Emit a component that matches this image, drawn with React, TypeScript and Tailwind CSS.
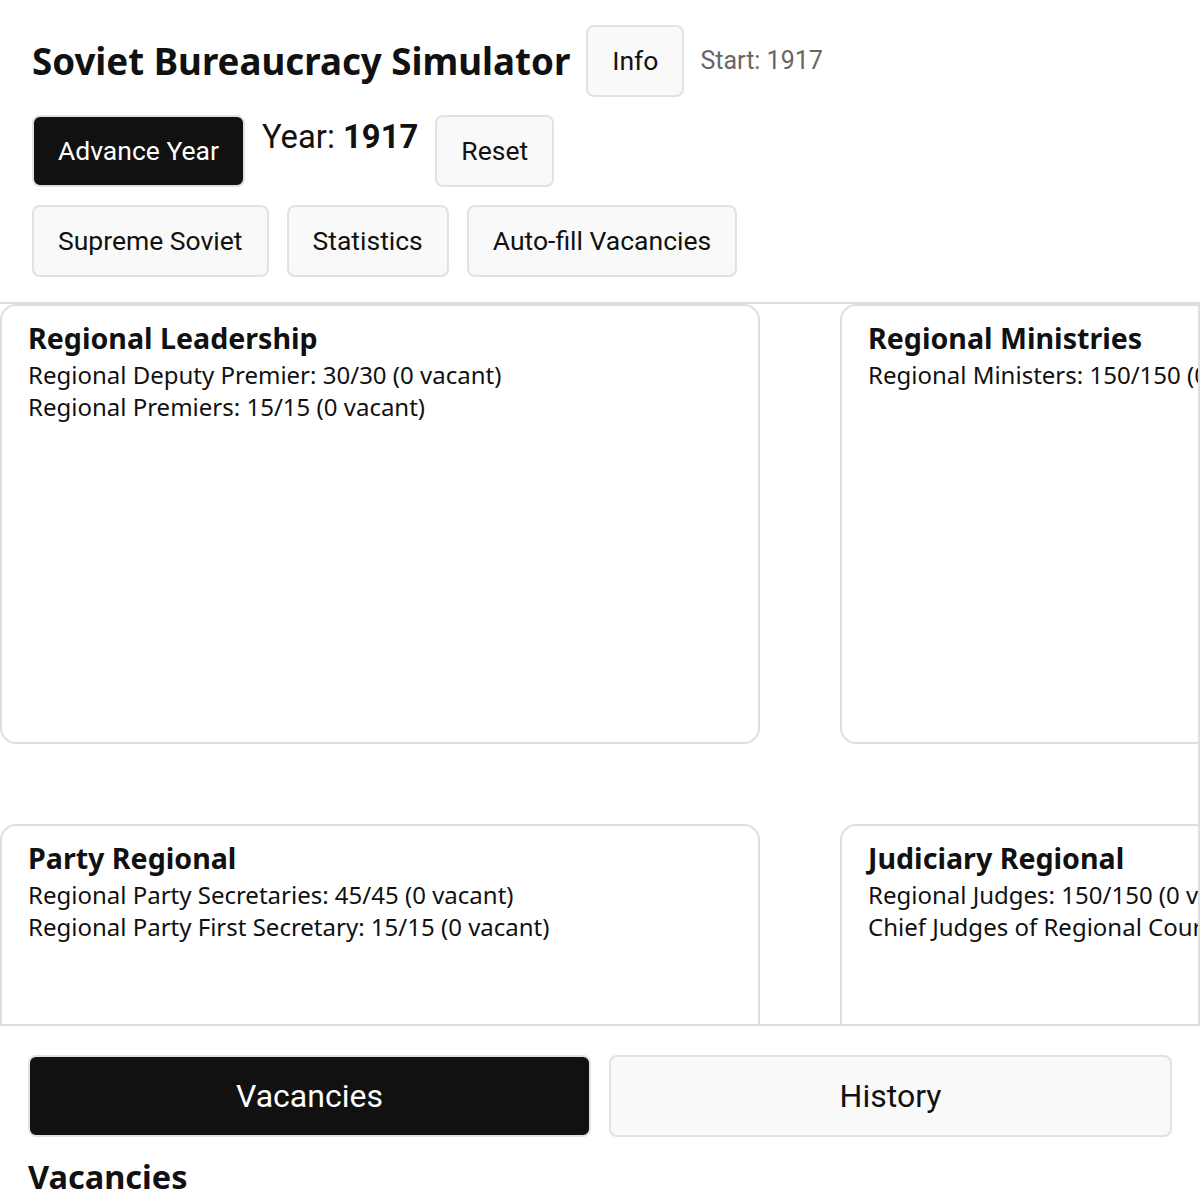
import React from "react";

type Office = { label: string; filled: number; total: number };
type Group = { title: string; offices: Office[] };

const groups: Group[] = [
  {
    title: "Regional Leadership",
    offices: [
      { label: "Regional Deputy Premier", filled: 30, total: 30 },
      { label: "Regional Premiers", filled: 15, total: 15 },
    ],
  },
  {
    title: "Regional Ministries",
    offices: [{ label: "Regional Ministers", filled: 150, total: 150 }],
  },
  {
    title: "Party Regional",
    offices: [
      { label: "Regional Party Secretaries", filled: 45, total: 45 },
      { label: "Regional Party First Secretary", filled: 15, total: 15 },
    ],
  },
  {
    title: "Judiciary Regional",
    offices: [
      { label: "Regional Judges", filled: 150, total: 150 },
      { label: "Chief Judges of Regional Courts", filled: 15, total: 15 },
    ],
  },
];

const btn =
  "h-[72px] px-6 rounded-lg border-2 border-[#e2e2e2] bg-[#f9f9f9] text-[26.5px] text-[#111] font-['Roboto',sans-serif] whitespace-nowrap";

function GroupCard({ group }: { group: Group }) {
  return (
    <div className="h-[440px] rounded-2xl border-2 border-[#dedede] bg-white px-[26px] pt-[10px]">
      <h3 className="text-[28.6px] font-bold leading-[43px] text-[#111] whitespace-nowrap">
        {group.title}
      </h3>
      {group.offices.map((o) => (
        <div key={o.label} className="text-[24px] leading-8 text-[#111] whitespace-nowrap">
          {o.label}: {o.filled}/{o.total} ({o.total - o.filled} vacant)
        </div>
      ))}
    </div>
  );
}

export default function App() {
  return (
    <div className="min-h-screen bg-white font-['Noto_Sans',sans-serif] text-[#111]">
      <header className="flex flex-col gap-[18px] px-8 pt-[25px]">
        <div className="flex items-center gap-4">
          <h1 className="text-[36.7px] font-bold leading-none">Soviet Bureaucracy Simulator</h1>
          <button className={btn}>Info</button>
          <span className="font-['Roboto',sans-serif] text-[25px] text-[#666]">Start: 1917</span>
        </div>
        <div className="flex items-start gap-[17px]">
          <button className={btn + " !bg-[#111] !text-white"}>Advance Year</button>
          <span className="font-['Roboto',sans-serif] text-[32.8px] leading-[44px]">
            Year: <b>1917</b>
          </span>
          <button className={btn}>Reset</button>
        </div>
        <div className="flex items-center gap-[18px]">
          <button className={btn}>Supreme Soviet</button>
          <button className={btn}>Statistics</button>
          <button className={btn}>Auto-fill Vacancies</button>
        </div>
      </header>

      <div className="mt-[25px] h-[724px] overflow-hidden border-y-2 border-r-2 border-[#dedede]">
        <div className="grid grid-cols-[760px_760px] gap-20">
          {groups.map((g) => (
            <GroupCard key={g.title} group={g} />
          ))}
        </div>
      </div>

      <section className="px-7 pt-[29px]">
        <div className="grid grid-cols-2 gap-[18px]">
          <button className="h-[82px] rounded-lg border-2 border-[#e2e2e2] bg-[#111] font-['Roboto',sans-serif] text-[32px] text-white">
            Vacancies
          </button>
          <button className="h-[82px] rounded-lg border-2 border-[#e2e2e2] bg-[#f9f9f9] font-['Roboto',sans-serif] text-[32px] text-[#111]">
            History
          </button>
        </div>
        <h2 className="mt-4 text-[32.5px] font-bold leading-[48px]">Vacancies</h2>
      </section>
    </div>
  );
}
